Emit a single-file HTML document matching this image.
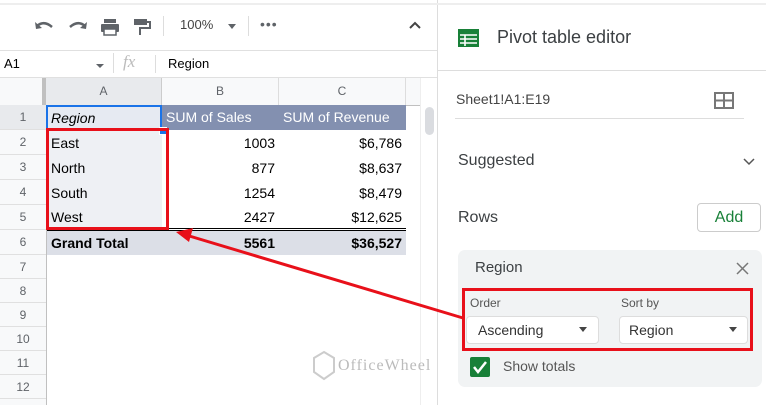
<!DOCTYPE html><html><head><style>
html,body{margin:0;width:766px;height:405px;overflow:hidden}
body{background:#fff;font-family:"Liberation Sans",Arial,sans-serif;position:relative}
.a{position:absolute}
.rn{position:absolute;left:0;width:46px;text-align:center;font-size:12px;color:#5f6368;border-bottom:1px solid #e0e0e0;background:#f8f9fa;box-sizing:border-box}
.c{position:absolute;font-size:14px;color:#000;box-sizing:border-box;white-space:nowrap}
</style></head><body>
<div class="a" style="left:0;top:0;width:437px;height:50px;background:#fff;border-bottom:1px solid #e0e0e0"></div>
<div class="a" style="left:0;top:3px;width:437px;height:2px;background:#eee"></div>
<svg class="a" style="left:33px;top:17px" width="120" height="20" viewBox="0 0 120 20">
<path d="M4 9 Q11 3 19 10" stroke="#5f6368" stroke-width="2.5" fill="none"/><path d="M2 5 L3 12 L9 11 Z" fill="#5f6368"/>
<path d="M52 9 Q45 3 37 10" stroke="#5f6368" stroke-width="2.5" fill="none"/><path d="M54 5 L53 12 L47 11 Z" fill="#5f6368"/>
<rect x="68" y="7" width="18" height="8" rx="1" fill="#5f6368"/><rect x="71" y="2" width="12" height="4" fill="#5f6368"/><rect x="71" y="12" width="12" height="6" fill="#fff" stroke="#5f6368" stroke-width="1.5"/>
<rect x="101" y="2" width="13" height="6" fill="#5f6368"/><path d="M114 5 H117 V11 H107 V18" stroke="#5f6368" stroke-width="2" fill="none"/></svg>
<div class="a" style="left:163px;top:16px;width:1px;height:20px;background:#ddd"></div>
<div class="a" style="left:180px;top:17px;font-size:13px;color:#444">100%</div>
<div class="a" style="left:228px;top:24px;border:4px solid transparent;border-top:5px solid #5f6368"></div>
<div class="a" style="left:248px;top:16px;width:1px;height:20px;background:#ddd"></div>
<div class="a" style="left:260px;top:16px;font-size:14px;color:#5f6368;letter-spacing:1px">•••</div>
<svg class="a" style="left:408px;top:20px" width="14" height="10"><path d="M2 8 L7 3 L12 8" stroke="#444" stroke-width="2" fill="none"/></svg>
<div class="a" style="left:0;top:50px;width:437px;height:27px;border-bottom:1px solid #e0e0e0"></div>
<div class="a" style="left:4px;top:56px;font-size:13px">A1</div>
<div class="a" style="left:96px;top:64px;border:4px solid transparent;border-top:4px solid #5f6368"></div>
<div class="a" style="left:113px;top:53px;width:1px;height:20px;background:#ddd"></div>
<div class="a" style="left:123px;top:52px;font-size:17px;color:#bbb;font-style:italic;font-family:'Liberation Serif',serif">fx</div>
<div class="a" style="left:155px;top:55px;width:1px;height:18px;background:#ddd"></div>
<div class="a" style="left:168px;top:56px;font-size:13px">Region</div>
<div class="a" style="left:0;top:78px;width:420px;height:27px;background:#f8f9fa;border-bottom:1px solid #c0c0c0"></div>
<div class="a" style="left:42px;top:78px;width:4px;height:27px;background:#c0c0c0"></div>
<div class="a" style="left:46px;top:78px;width:116px;height:27px;background:#e8eaed;text-align:center;line-height:27px;font-size:12px;color:#5f6368;border-right:1px solid #ccc;box-sizing:border-box">A</div>
<div class="a" style="left:162px;top:78px;width:117px;height:27px;text-align:center;line-height:27px;font-size:12px;color:#5f6368;border-right:1px solid #ddd;box-sizing:border-box">B</div>
<div class="a" style="left:279px;top:78px;width:127px;height:27px;text-align:center;line-height:27px;font-size:12px;color:#5f6368;border-right:1px solid #ddd;box-sizing:border-box">C</div>
<div class="rn" style="top:105px;height:25px;line-height:25px;background:#e8eaed">1</div>
<div class="rn" style="top:130px;height:25px;line-height:25px">2</div>
<div class="rn" style="top:155px;height:25px;line-height:25px">3</div>
<div class="rn" style="top:180px;height:25px;line-height:25px">4</div>
<div class="rn" style="top:205px;height:25px;line-height:25px">5</div>
<div class="rn" style="top:230px;height:25px;line-height:25px">6</div>
<div class="rn" style="top:255px;height:24px;line-height:24px">7</div>
<div class="rn" style="top:279px;height:24px;line-height:24px">8</div>
<div class="rn" style="top:303px;height:24px;line-height:24px">9</div>
<div class="rn" style="top:327px;height:24px;line-height:24px">10</div>
<div class="rn" style="top:351px;height:24px;line-height:24px">11</div>
<div class="rn" style="top:375px;height:24px;line-height:24px">12</div>
<div class="rn" style="top:399px;height:6px;border-bottom:none"></div>
<div class="a" style="left:46px;top:105px;width:1px;height:300px;background:#c0c0c0"></div>
<div class="a" style="left:47px;top:130px;width:115px;height:100px;background:#eef0f4"></div>
<div class="a" style="left:162px;top:105px;width:244px;height:25px;background:#8390b0"></div>
<div class="c" style="left:46px;top:105px;width:116px;height:25px;border:2px solid #1a73e8;background:#e6eaf2;font-style:italic;padding:3px 3px">Region</div>
<div class="a" style="left:159px;top:127px;width:6px;height:6px;background:#1a73e8;border:1px solid #fff"></div>
<div class="c" style="left:166px;top:109px;color:#fff">SUM of Sales</div>
<div class="c" style="left:283px;top:109px;color:#fff">SUM of Revenue</div>
<div class="c" style="left:51px;top:135px">East</div><div class="c" style="left:162px;top:135px;width:113px;text-align:right">1003</div><div class="c" style="left:279px;top:135px;width:123px;text-align:right">$6,786</div>
<div class="c" style="left:51px;top:160px">North</div><div class="c" style="left:162px;top:160px;width:113px;text-align:right">877</div><div class="c" style="left:279px;top:160px;width:123px;text-align:right">$8,637</div>
<div class="c" style="left:51px;top:185px">South</div><div class="c" style="left:162px;top:185px;width:113px;text-align:right">1254</div><div class="c" style="left:279px;top:185px;width:123px;text-align:right">$8,479</div>
<div class="c" style="left:51px;top:209px">West</div><div class="c" style="left:162px;top:209px;width:113px;text-align:right">2427</div><div class="c" style="left:279px;top:209px;width:123px;text-align:right">$12,625</div>
<div class="a" style="left:47px;top:228px;width:359px;height:1px;background:#000"></div>
<div class="a" style="left:47px;top:230px;width:359px;height:1px;background:#000"></div>
<div class="a" style="left:47px;top:231px;width:359px;height:24px;background:#dcdfe7"></div>
<div class="c" style="left:51px;top:235px;font-weight:bold">Grand Total</div><div class="c" style="left:162px;top:235px;width:113px;text-align:right;font-weight:bold">5561</div><div class="c" style="left:279px;top:235px;width:123px;text-align:right;font-weight:bold">$36,527</div>
<div class="a" style="left:420px;top:78px;width:17px;height:327px;background:#fff;border-left:1px solid #eee"></div>
<div class="a" style="left:425px;top:107px;width:9px;height:28px;background:#dadce0;border-radius:5px"></div>
<div class="a" style="left:437px;top:0;width:329px;height:405px;background:#fff;border-left:1px solid #ddd"></div>
<div class="a" style="left:437px;top:3px;width:329px;height:2px;background:#eee"></div>
<svg class="a" style="left:458px;top:29px" width="21" height="18"><rect width="21" height="18" fill="#188038"/><path d="M2 6 H19 M2 10 H19 M2 14 H19 M7 6 V17" stroke="#fff" stroke-width="1.6"/></svg>
<div class="a" style="left:497px;top:27px;font-size:18px;color:#3c4043">Pivot table editor</div>
<div class="a" style="left:437px;top:70px;width:329px;height:1px;background:#ddd"></div>
<div class="a" style="left:456px;top:91px;font-size:14px;color:#444">Sheet1!A1:E19</div>
<svg class="a" style="left:714px;top:92px" width="20" height="17"><rect x="1" y="1" width="18" height="15" fill="none" stroke="#777" stroke-width="2"/><path d="M10 1 V16 M1 8.5 H19" stroke="#777" stroke-width="2"/></svg>
<div class="a" style="left:455px;top:118px;width:289px;height:1px;background:#ddd"></div>
<div class="a" style="left:458px;top:152px;font-size:16px;color:#3c4043">Suggested</div>
<svg class="a" style="left:743px;top:158px" width="12" height="8"><path d="M1 1 L6 6 L11 1" stroke="#555" stroke-width="1.5" fill="none"/></svg>
<div class="a" style="left:458px;top:209px;font-size:16px;color:#3c4043">Rows</div>
<div class="a" style="left:697px;top:203px;width:64px;height:29px;border:1px solid #ccc;border-radius:4px;box-sizing:border-box;text-align:center;line-height:27px;color:#188038;font-size:16px">Add</div>
<div class="a" style="left:458px;top:250px;width:304px;height:137px;background:#f1f3f4;border-radius:7px"></div>
<div class="a" style="left:475px;top:259px;font-size:15px;color:#3c4043">Region</div>
<svg class="a" style="left:736px;top:262px" width="13" height="13"><path d="M1 1 L12 12 M12 1 L1 12" stroke="#777" stroke-width="1.5"/></svg>
<div class="a" style="left:470px;top:296px;font-size:12px;color:#555">Order</div>
<div class="a" style="left:621px;top:296px;font-size:12px;color:#555">Sort by</div>
<div class="a" style="left:466px;top:316px;width:133px;height:28px;background:#fff;border:1px solid #ddd;border-radius:4px;box-sizing:border-box"></div>
<div class="a" style="left:478px;top:322px;font-size:14px;color:#333">Ascending</div>
<div class="a" style="left:579px;top:327px;border:4px solid transparent;border-top:5px solid #444"></div>
<div class="a" style="left:619px;top:316px;width:129px;height:28px;background:#fff;border:1px solid #ddd;border-radius:4px;box-sizing:border-box"></div>
<div class="a" style="left:629px;top:322px;font-size:14px;color:#333">Region</div>
<div class="a" style="left:729px;top:327px;border:4px solid transparent;border-top:5px solid #444"></div>
<div class="a" style="left:462px;top:288px;width:291px;height:63px;border:3px solid #e8101a;box-sizing:border-box"></div>
<svg class="a" style="left:470px;top:357px" width="20" height="20"><rect width="20" height="20" rx="2" fill="#188038"/><path d="M4 10 L8 15 L16 5" stroke="#fff" stroke-width="2.5" fill="none"/></svg>
<div class="a" style="left:503px;top:358px;font-size:14px;color:#555">Show totals</div>
<svg class="a" style="left:312px;top:350px" width="24" height="32"><path d="M12 2 L22 8 V22 L12 29 L2 22 V8 Z" fill="none" stroke="#ccc" stroke-width="2"/></svg>
<div class="a" style="left:338px;top:357px;font-size:16px;color:#bbb;letter-spacing:1px;font-family:'Liberation Serif',serif">OfficeWheel</div>
<div class="a" style="left:46px;top:128px;width:123px;height:102px;border:3px solid #e8101a;box-sizing:border-box"></div>
<svg class="a" style="left:0;top:0" width="766" height="405"><path d="M463 318 L186 235" stroke="#e8101a" stroke-width="3"/><path d="M176 232 L193 228 L189 242 Z" fill="#e8101a"/></svg>
</body></html>
